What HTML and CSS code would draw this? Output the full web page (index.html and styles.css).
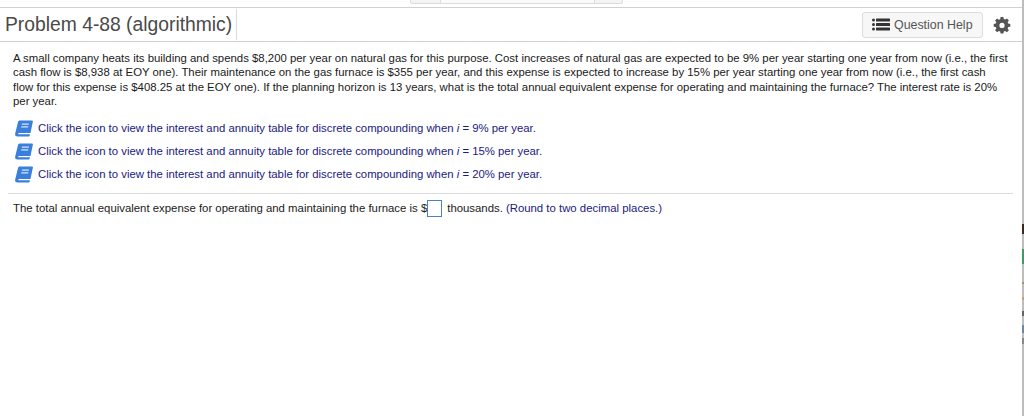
FILE: index.html
```html
<!DOCTYPE html>
<html lang="en">
<head>
<meta charset="utf-8">
<title>Problem 4-88 (algorithmic)</title>
<link rel="stylesheet" href="styles.css">
</head>
<body>
<div class="page">
  <main class="main">
    <div class="toolbar-stub"><div class="stub"><span class="stub-a"></span><span class="stub-b"></span><span class="stub-c"></span></div></div>
    <header class="header">
      <h1 class="title">Problem 4-88 (algorithmic)</h1>
      <div class="tools">
        <button class="help">
          <svg class="help-icon" width="18" height="13" viewBox="0 0 18 13"><g fill="#333"><circle cx="1.500" cy="2" r="1.500"/><circle cx="1.500" cy="6.500" r="1.500"/><circle cx="1.500" cy="11" r="1.500"/><rect x="4" y="0.500" width="14" height="3" rx=".6"/><rect x="4" y="5" width="14" height="3" rx=".6"/><rect x="4" y="9.500" width="14" height="3" rx=".6"/></g></svg>
          <span>Question Help</span>
        </button>
        <svg class="gear" width="18" height="18" viewBox="0 0 18 18"><path fill="#555" fill-rule="evenodd" d="M7.600 1h2.800l.4 2.100 1.300.5 1.800-1.200 2 2-1.200 1.800.5 1.300 2.100.4v2.800l-2.100.4-.5 1.300 1.200 1.800-2 2-1.800-1.200-1.300.5-.4 2.100H7.600l-.4-2.100-1.300-.5-1.800 1.200-2-2 1.200-1.800-.5-1.300L.7 10.800V8l2.100-.4.500-1.300L2.100 4.500l2-2 1.800 1.200 1.300-.5zM9 6.800a2.600 2.600 0 1 0 0 5.200 2.600 2.600 0 0 0 0-5.200z"/></svg>
      </div>
    </header>
    <section class="content">
      <p class="question">A small company heats its building and spends $8,200 per year on natural gas for this purpose. Cost increases of natural gas are expected to be 9% per year starting one year from now (i.e., the first cash flow is $8,938 at EOY one). Their maintenance on the gas furnace is $355 per year, and this expense is expected to increase by 15% per year starting one year from now (i.e., the first cash flow for this expense is $408.25 at the EOY one). If the planning horizon is 13 years, what is the total annual equivalent expense for operating and maintaining the furnace? The interest rate is 20% per year.</p>
      <ul class="tables">
        <li class="table-row">
          <svg class="book" width="18" height="17" viewBox="0 0 18 17"><path fill="#3a7fdb" d="M5 0.500H17c.7 0 1 .4.900 1L15.500 13H4c-1 0-1 1.300 0 1.300h11l-.3 1.200c-.1.600-.4 1-1 1H2.500C.8 16.500-.2 15.300.2 13.500L3 2c.3-1 1-1.500 2-1.500z"/><path fill="#d6e5f8" d="M7 3.500h7l-.3 1.300H6.700zM6.400 6.300h7l-.3 1.300H6.100z"/></svg>
          <span>Click the icon to view the interest and annuity table for discrete compounding when <i>i</i> = 9% per year.</span>
        </li>
        <li class="table-row">
          <svg class="book" width="18" height="17" viewBox="0 0 18 17"><path fill="#3a7fdb" d="M5 0.500H17c.7 0 1 .4.900 1L15.500 13H4c-1 0-1 1.300 0 1.300h11l-.3 1.200c-.1.600-.4 1-1 1H2.500C.8 16.500-.2 15.300.2 13.500L3 2c.3-1 1-1.500 2-1.500z"/><path fill="#d6e5f8" d="M7 3.500h7l-.3 1.300H6.700zM6.400 6.300h7l-.3 1.300H6.100z"/></svg>
          <span>Click the icon to view the interest and annuity table for discrete compounding when <i>i</i> = 15% per year.</span>
        </li>
        <li class="table-row">
          <svg class="book" width="18" height="17" viewBox="0 0 18 17"><path fill="#3a7fdb" d="M5 0.500H17c.7 0 1 .4.900 1L15.500 13H4c-1 0-1 1.300 0 1.300h11l-.3 1.200c-.1.600-.4 1-1 1H2.500C.8 16.500-.2 15.300.2 13.500L3 2c.3-1 1-1.500 2-1.500z"/><path fill="#d6e5f8" d="M7 3.500h7l-.3 1.300H6.700zM6.400 6.300h7l-.3 1.300H6.100z"/></svg>
          <span>Click the icon to view the interest and annuity table for discrete compounding when <i>i</i> = 20% per year.</span>
        </li>
      </ul>
      <div class="answer">
        <span>The total annual equivalent expense for operating and maintaining the furnace is $</span>
        <input class="answer-box" type="text" aria-label="Answer">
        <span>thousands.</span>
        <span class="hint">(Round to two decimal places.)</span>
      </div>
    </section>
  </main>
  <div class="edge"></div>
</div>
</body>
</html>
```

FILE: styles.css
```css
html, body {
  margin: 0;
  padding: 0;
  height: 100%;
  background: #fff;
}

body {
  font-family: "Liberation Sans", Arial, sans-serif;
  color: #1a1a1a;
  overflow: hidden;
}

.page {
  display: flex;
  width: 1024px;
  height: 416px;
}

.main {
  flex: 1;
  min-width: 0;
}

.toolbar-stub {
  height: 7px;
  padding-left: 410px;
  box-sizing: border-box;
}

.stub {
  display: flex;
  width: 213px;
  height: 4px;
  box-sizing: border-box;
  border: 1px solid #dcdce0;
  border-top: 0;
  border-radius: 0 0 3px 3px;
  background: #f4f4f4;
}

.stub-a { width: 29px; border-right: 1px solid #dcdce0; }
.stub-b { width: 153px; border-right: 1px solid #dcdce0; background: #fafafa; }
.stub-c { flex: 1; }

.header {
  display: flex;
  justify-content: space-between;
  align-items: center;
  height: 33px;
  border-top: 1px solid #cfcfd6;
  border-bottom: 1px solid #cfcfd6;
}

.title {
  margin: 0;
  padding: 0 0 0 5px;
  height: 31px;
  line-height: 31px;
  width: 231px;
  border-right: 1px solid #d5dbe6;
  font-size: 19.3px;
  font-weight: 400;
  color: #4a4a4a;
  white-space: nowrap;
}

.tools {
  display: flex;
  align-items: center;
  gap: 10px;
  padding-right: 11px;
}

.help {
  display: flex;
  align-items: center;
  gap: 4px;
  width: 121px;
  height: 26px;
  padding: 0 0 0 9px;
  border: 1px solid #dcdcdc;
  border-radius: 3px;
  background: #f7f7f7;
  font-family: inherit;
  font-size: 12.4px;
  color: #555;
}

.content {
  padding: 9px 13px 0 13px;
}

.question {
  margin: 0;
  font-size: 11.38px;
  line-height: 14.4px;
}

.tables {
  list-style: none;
  margin: 8px -4px 0 -5px;
  padding: 0 0 7px 7px;
  border-bottom: 1px solid #dcdce2;
}

.table-row {
  display: flex;
  align-items: center;
  gap: 5px;
  height: 23px;
  font-size: 11.35px;
  color: #1a1a80;
  white-space: nowrap;
}

.answer {
  display: flex;
  align-items: center;
  height: 17px;
  margin-top: 6px;
  font-size: 11.38px;
  white-space: nowrap;
}

.answer-box {
  width: 15px;
  height: 17px;
  margin: 0 5px 0 0;
  padding: 0;
  border: 1px solid #4a7fd0;
  box-sizing: border-box;
  background: #fff;
}

.hint {
  margin-left: 3px;
  color: #1a1a80;
}

.edge {
  width: 2px;
  height: 416px;
  background: linear-gradient(to bottom,
    #bdbdbd 0 224px, #3a2a1c 224px 234px, #bdbdbd 234px 249px,
    #3d9c63 249px 264px, #bdbdbd 264px 282px, #b09060 282px 284px,
    #bdbdbd 284px 297px, #c8a26c 297px 300px, #bdbdbd 300px 311px,
    #666 311px 316px, #bdbdbd 316px 325px, #6f86a8 325px 333px,
    #bdbdbd 333px 338px, #888 338px 344px, #bdbdbd 344px 416px);
}
```
